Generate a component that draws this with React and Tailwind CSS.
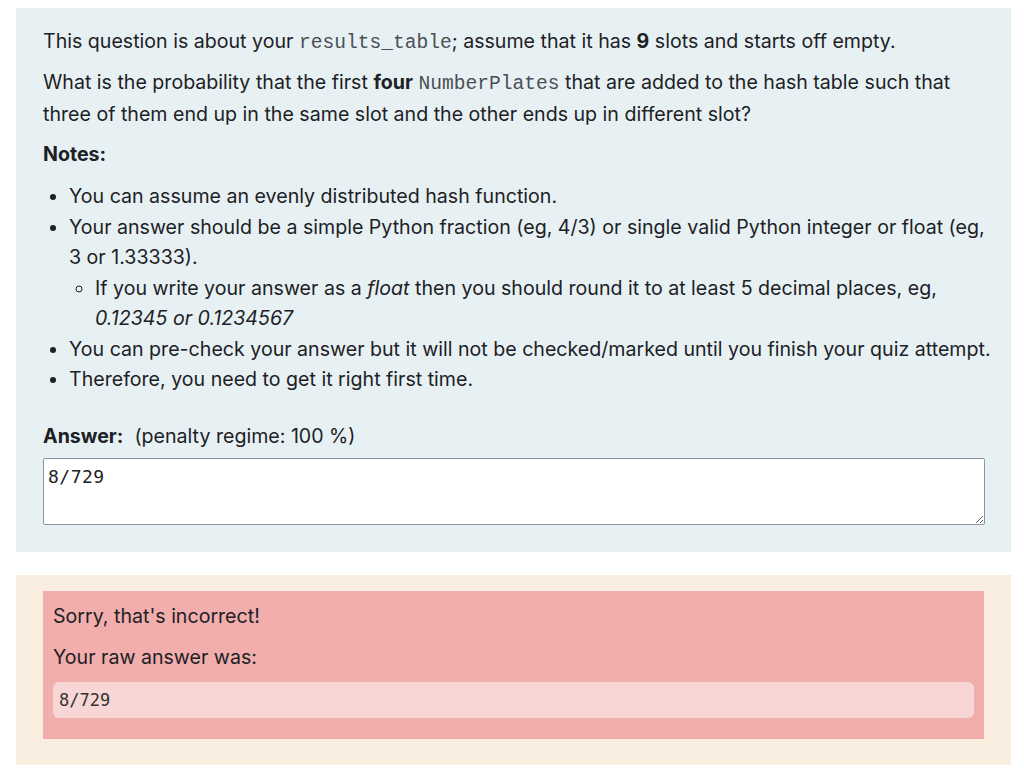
const sans = { fontFamily: 'Inter, "Noto Sans", sans-serif' };

const Code = ({ children }) => (
  <span className="font-[family-name:Liberation_Mono,monospace] leading-none text-[#4a4f55]">{children}</span>
);

export default function App() {
  return (
    <div className="min-h-[779px] bg-white pt-2 pl-4 pr-[13px] text-[19.6px] leading-[30.5px] text-[#1d2125]" style={sans}>
      <div className="bg-[#e7f1f4] pl-[27px] pr-[20px] pt-[18px] pb-[27px]">
        <p className="mb-[9px]">
          This question is about your <Code>results_table</Code>; assume that it has <b>9</b> slots and starts off empty.
        </p>
        <p className="mb-[9px] leading-[32px]">
          What is the probability that the first <b>four</b> <Code>NumberPlates</Code> that are added to the hash table such that three of them end up in the same slot and the other ends up in different slot?
        </p>
        <p className="mb-[12px] font-bold">Notes:</p>
        <ul className="list-disc pl-[26px]">
          <li>You can assume an evenly distributed hash function.</li>
          <li>
            Your answer should be a simple Python fraction (eg, 4/3) or single valid Python integer or float (eg, 3 or 1.33333).
            <ul className="list-[circle] pl-[26px]">
              <li>
                If you write your answer as a <i>float</i> then you should round it to at least 5 decimal places, eg, <i>0.12345 or 0.1234567</i>
              </li>
            </ul>
          </li>
          <li>You can pre-check your answer but it will not be checked/marked until you finish your quiz attempt.</li>
          <li>Therefore, you need to get it right first time.</li>
        </ul>
        <div className="mt-[26px] mb-[7px]">
          <span className="font-bold">Answer:</span>&nbsp; (penalty regime: 100 %)
        </div>
        <textarea
          readOnly
          defaultValue="8/729"
          className="block h-[67px] w-[942px] resize-y rounded-[2px] border border-[#8f959e] bg-white px-[4px] pt-[6px] font-[family-name:DejaVu_Sans_Mono,monospace] text-[18px] leading-[24px] tracking-[0.5px] text-[#1d2125] outline-none"
        />
      </div>
      <div className="mt-[23px] bg-[#f9eddf] pl-[27px] pr-[27px] pt-[16px] pb-[26px]">
        <div className="bg-[#f2aeac] px-[10px] pt-[10px] pb-[21px]">
          <p className="mb-[10px]">Sorry, that's incorrect!</p>
          <p className="mb-[10px]">Your raw answer was:</p>
          <div className="h-[36px] rounded-[6px] bg-[#f8d6d6] px-[6px] font-[family-name:DejaVu_Sans_Mono,monospace] text-[17px] leading-[36px] text-[#333]">
            8/729
          </div>
        </div>
      </div>
    </div>
  );
}
